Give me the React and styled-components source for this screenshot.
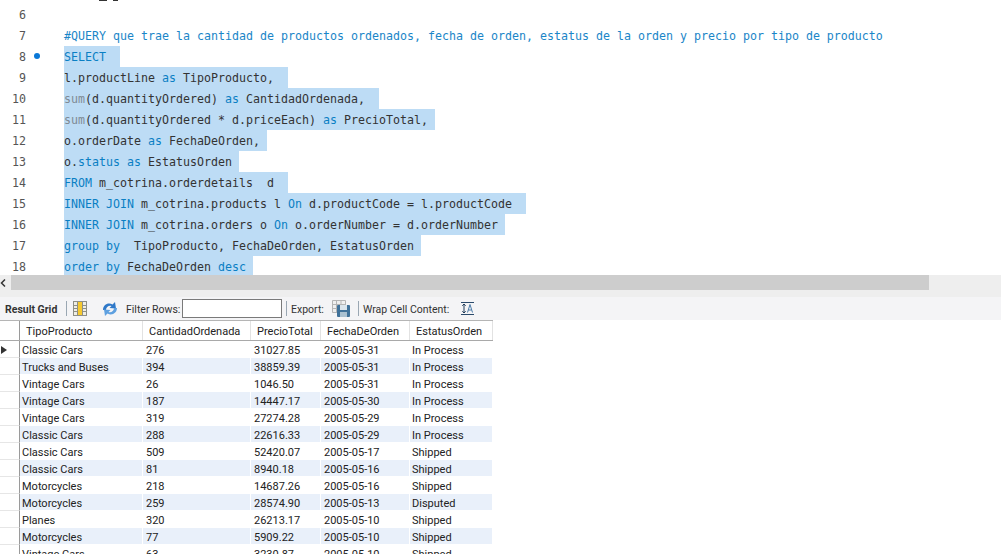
import React from 'react';
import styled, { createGlobalStyle } from 'styled-components';

const Global = createGlobalStyle`
  html, body { margin: 0; padding: 0; background: #fff; overflow: hidden; }
  #root { width: 1001px; height: 554px; overflow: hidden; }
`;
const Page = styled.div`display:flex;flex-direction:column;width:1001px;height:554px;overflow:hidden;background:#fff;`;
const Editor = styled.div`height:275px;flex:none;overflow:hidden;box-sizing:border-box;font-family:"DejaVu Sans Mono",monospace;font-size:11.63px;color:#333;`;
const TopEdge = styled.div`display:flex;height:4px;padding-left:99px;gap:6px;align-items:flex-start;`;
const Clipped = styled.span`display:block;height:1px;width:${p => p.$w}px;background:#333;`;
const Line = styled.div`display:flex;height:21px;line-height:23px;white-space:pre;`;
const Num = styled.div`width:26px;text-align:right;color:#555;flex:none;`;
const Gutter = styled.div`width:38px;flex:none;position:relative;`;
const Dot = styled.span`position:absolute;left:8px;top:7px;width:6px;height:6px;border-radius:50%;background:#0a78d7;`;
const Code = styled.div`background:${p => (p.$sel ? '#bddcf5' : 'transparent')};padding-right:${p => (p.$sel ? 7 : 0)}px;`;
const Kw = styled.span`color:#0a7fc4;`;
const Fn = styled.span`color:#7f8a94;`;
const Cm = styled.span`color:#1a86c8;`;
const HBar = styled.div`height:22px;flex:none;background:#eeeeee;`;
const BarTop = styled.div`display:flex;height:15px;`;
const Arrow = styled.div`width:11px;display:flex;align-items:center;`;
const Thumb = styled.div`width:918px;background:#cdcdcd;`;
const Toolbar = styled.div`height:23px;flex:none;background:#f4f4f6;display:flex;align-items:center;font-family:Roboto,sans-serif;font-size:10.5px;color:#333;padding-left:5px;box-sizing:border-box;`;
const Bold = styled.b`width:61px;flex:none;font-weight:700;padding-top:2px;`;
const Sep = styled.i`width:1px;height:15px;background:#9aa7b3;flex:none;margin:${p => p.$m};`;
const Filter = styled.div`width:98px;height:17px;border:1px solid #7a7a7a;background:#fff;flex:none;margin-left:4px;`;
const Label = styled.span`white-space:nowrap;flex:none;width:${p => p.$w}px;padding-top:2px;`;
const IconBox = styled.span`display:flex;flex:none;margin:${p => p.$m || 0};`;
const Grid = styled.div`display:flex;flex:none;flex-direction:column;width:493px;font-family:Roboto,sans-serif;font-size:11px;color:#222;`;
const Head = styled.div`display:grid;grid-template-columns:20px 123px 108px 70px 89px 83px;height:21px;flex:none;box-sizing:border-box;border-top:1px solid #b5b5b5;border-bottom:1px solid #a9a9a9;`;
const Hc = styled.div`border-right:1px solid #e2e2e2;display:flex;align-items:center;padding:2px 0 0 6px;box-sizing:border-box;&:first-child{border-right-color:#9a9a9a;}`;
const Rows = styled.div`display:flex;flex-direction:column;flex:none;`;
const Row = styled.div`display:grid;grid-template-columns:20px 123px 108px 70px 89px 83px;height:17px;flex:none;`;
const Corner = styled.div`border-right:1px solid #9a9a9a;border-bottom:1px solid #e6e6e6;background:#fff;position:relative;`;
const Marker = styled.span`position:absolute;left:1px;top:5px;border-left:6px solid #333;border-top:4px solid transparent;border-bottom:4px solid transparent;`;
const Cell = styled.div`background:${p => (p.$alt ? '#e9f0fa' : '#fff')};border-right:1px solid #fff;border-bottom:1px solid #fff;padding:2px 0 0 ${p => p.$pad}px;line-height:16px;white-space:nowrap;overflow:hidden;box-sizing:border-box;`;

const rows = [
  ['Classic Cars','276','31027.85','2005-05-31','In Process'],
  ['Trucks and Buses','394','38859.39','2005-05-31','In Process'],
  ['Vintage Cars','26','1046.50','2005-05-31','In Process'],
  ['Vintage Cars','187','14447.17','2005-05-30','In Process'],
  ['Vintage Cars','319','27274.28','2005-05-29','In Process'],
  ['Classic Cars','288','22616.33','2005-05-29','In Process'],
  ['Classic Cars','509','52420.07','2005-05-17','Shipped'],
  ['Classic Cars','81','8940.18','2005-05-16','Shipped'],
  ['Motorcycles','218','14687.26','2005-05-16','Shipped'],
  ['Motorcycles','259','28574.90','2005-05-13','Disputed'],
  ['Planes','320','26213.17','2005-05-10','Shipped'],
  ['Motorcycles','77','5909.22','2005-05-10','Shipped'],
  ['Vintage Cars','63','3230.87','2005-05-10','Shipped'],
];
const pads = [2, 3, 3, 3, 2];
const code = [
  [6, null],
  [7, <Cm>#QUERY que trae la cantidad de productos ordenados, fecha de orden, estatus de la orden y precio por tipo de producto</Cm>, false],
  [8, <><Kw>SELECT</Kw>{' '}</>, true],
  [9, <>l.productLine <Kw>as</Kw> TipoProducto,{' '}</>, true],
  [10, <><Fn>sum</Fn>(d.quantityOrdered) <Kw>as</Kw> CantidadOrdenada,{' '}</>, true],
  [11, <><Fn>sum</Fn>(d.quantityOrdered * d.priceEach) <Kw>as</Kw> PrecioTotal,</>, true],
  [12, <>o.orderDate <Kw>as</Kw> FechaDeOrden,</>, true],
  [13, <>o.<Kw>status</Kw> <Kw>as</Kw> EstatusOrden</>, true],
  [14, <><Kw>FROM</Kw> m_cotrina.orderdetails  d{' '}</>, true],
  [15, <><Kw>INNER JOIN</Kw> m_cotrina.products l <Kw>On</Kw> d.productCode = l.productCode{' '}</>, true],
  [16, <><Kw>INNER JOIN</Kw> m_cotrina.orders o <Kw>On</Kw> o.orderNumber = d.orderNumber</>, true],
  [17, <><Kw>group by</Kw>  TipoProducto, FechaDeOrden, EstatusOrden</>, true],
  [18, <><Kw>order by</Kw> FechaDeOrden <Kw>desc</Kw></>, true],
];

const GridIcon = () => (
  <svg width="14" height="15" viewBox="0 0 14 15">
    <rect x=".5" y=".5" width="13" height="14" fill="#efeee6" stroke="#8f8f86"/>
    <rect x="5" y="1" width="4" height="13" fill="#f7c92e"/>
    <path d="M4.500 1v13M9.500 1v13M1 4.500h3M1 7.500h3M1 10.500h3M10 4.500h3M10 7.500h3M10 10.500h3" stroke="#8f8f86" fill="none"/>
  </svg>
);
const RefreshIcon = () => (
  <svg width="16" height="14" viewBox="0 0 16 14">
    <path d="M1 8C1 3 6 0 10.500 2.500L13 0l1 6.500-6.500-.5 2-2C7 3 4 5 4 8z" fill="#2f78c8"/>
    <path d="M15 6c0 5-5 8-9.500 5.500L3 14 2 7.500l6.500.5-2 2C9 11 12 9 12 6z" fill="#5ea0e0"/>
  </svg>
);
const ExportIcon = () => (
  <svg width="18" height="17" viewBox="0 0 18 17">
    <path d="M.5.500h13v12H.5zM.5 4.500h13M.5 8.500h13M4.500.5v12M9 .5v12" stroke="#b5b5b5" fill="#efefef"/>
    <rect x="5" y="5" width="13" height="12" rx="1" fill="#3f7199"/>
    <rect x="8" y="5" width="7" height="5" fill="#dbe5ec"/>
    <rect x="8" y="12" width="7" height="5" fill="#a9c0d0"/>
  </svg>
);
const WrapIcon = () => (
  <svg width="13" height="13" viewBox="0 0 13 13">
    <path d="M0 .5h13M0 12.500h13" stroke="#2b4a6b" fill="none"/>
    <path d="M3 2v9M1.300 3.700 3 2l1.700 1.700M1.300 9.300 3 11l1.700-1.700" stroke="#1f3a58" fill="none"/>
    <path d="M6.500 10.500 9 2.500l2.500 8M7.500 8h3" stroke="#4a7aa8" fill="none"/>
  </svg>
);

export default function App() {
  return (
    <Page>
      <Global />
      <Editor>
        <TopEdge><Clipped $w={8} /><Clipped $w={5} /></TopEdge>
        {code.map(([n, c, sel]) => (
          <Line key={n}>
            <Num>{n}</Num>
            <Gutter>{n === 8 && <Dot />}</Gutter>
            {c && <Code $sel={sel}>{c}</Code>}
          </Line>
        ))}
      </Editor>
      <HBar>
        <BarTop>
          <Arrow><svg width="6" height="8" viewBox="0 0 6 8"><path d="M5 .5 1.500 4 5 7.500" stroke="#333" strokeWidth="1.500" fill="none"/></svg></Arrow>
          <Thumb />
        </BarTop>
      </HBar>
      <Toolbar>
        <Bold>Result Grid</Bold>
        <Sep $m="0 6px 0 0" />
        <IconBox><GridIcon /></IconBox>
        <IconBox $m="0 8px 0 15px"><RefreshIcon /></IconBox>
        <Label $w={52}>Filter Rows:</Label>
        <Filter />
        <Sep $m="0 4px 0 4px" />
        <Label $w={41}>Export:</Label>
        <IconBox><ExportIcon /></IconBox>
        <Sep $m="0 4px 0 8px" />
        <Label $w={98}>Wrap Cell Content:</Label>
        <IconBox><WrapIcon /></IconBox>
      </Toolbar>
      <Grid>
        <Head>
          <Hc />
          <Hc>TipoProducto</Hc>
          <Hc>CantidadOrdenada</Hc>
          <Hc>PrecioTotal</Hc>
          <Hc>FechaDeOrden</Hc>
          <Hc>EstatusOrden</Hc>
        </Head>
        <Rows>
          {rows.map((r, i) => (
            <Row key={i}>
              <Corner>{i === 0 && <Marker />}</Corner>
              {r.map((v, j) => <Cell key={j} $alt={i % 2 === 1} $pad={pads[j]}>{v}</Cell>)}
            </Row>
          ))}
        </Rows>
      </Grid>
    </Page>
  );
}
